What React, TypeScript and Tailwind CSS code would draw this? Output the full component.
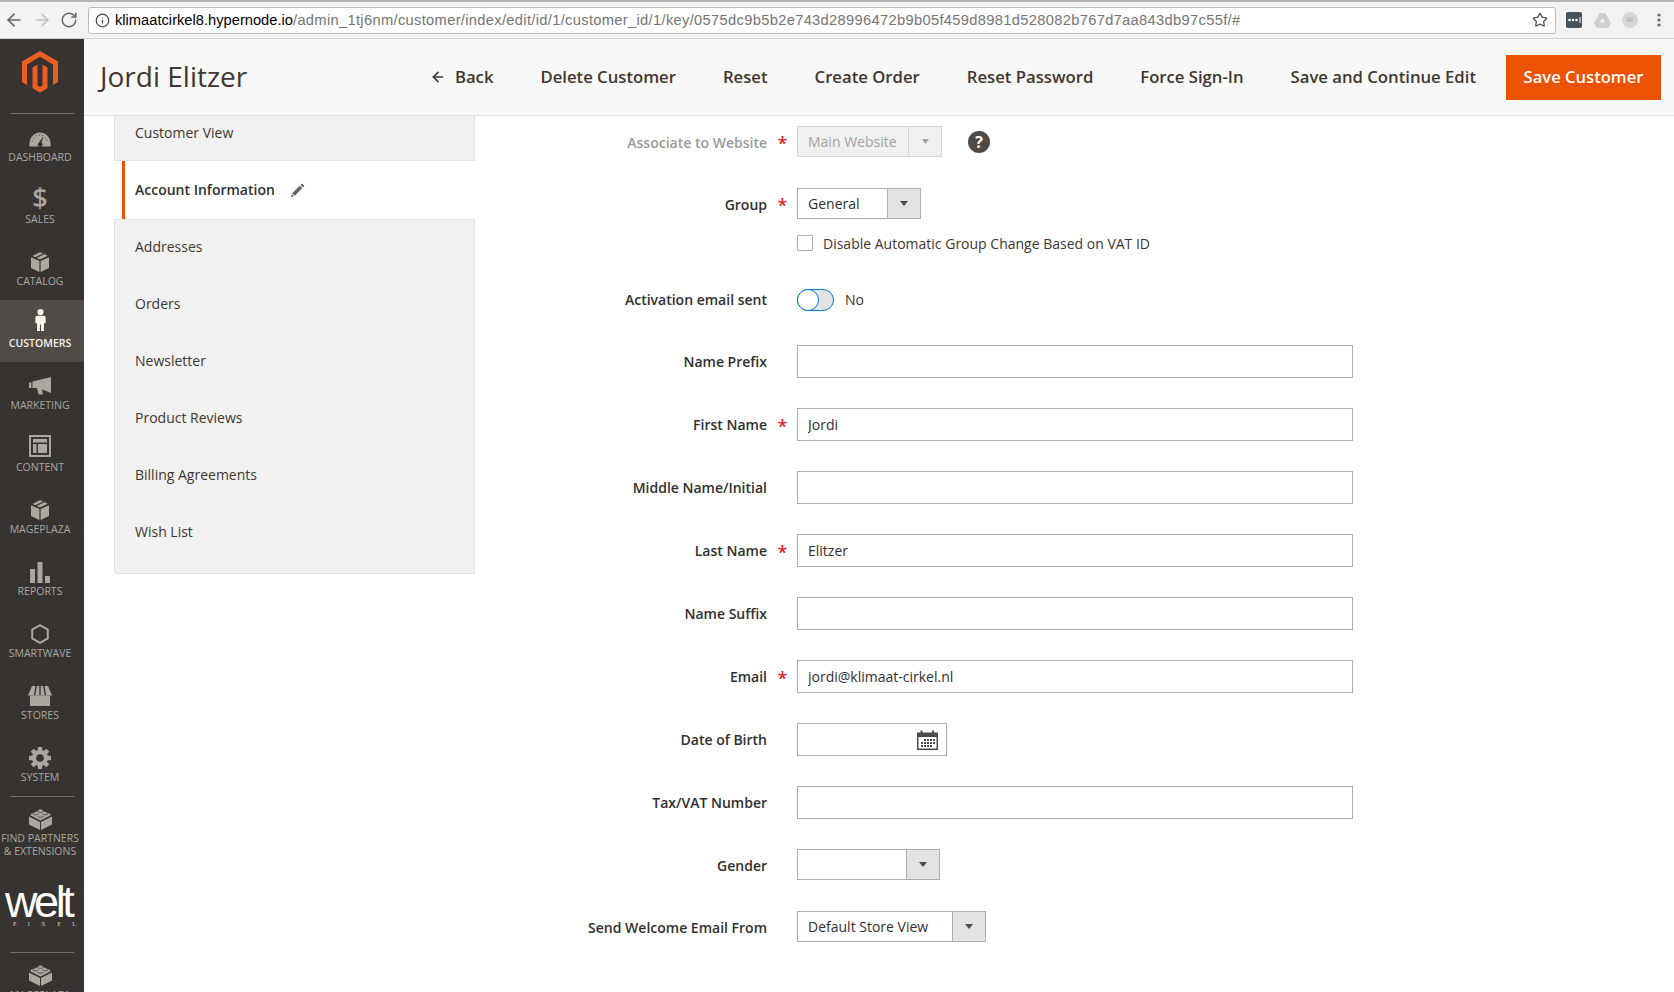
import React from "react";
import { ArrowLeft, ArrowRight, RotateCw, Star, Info } from "lucide-react";

const IconBox = ({ children }: { children: React.ReactNode }) => (
  <div className="flex h-[26px] items-center justify-center">{children}</div>
);

const BG = "#373330";

const Gauge = ({ c }: { c: string }) => (
  <svg width="22" height="15" viewBox="0 0 23 17" className="mt-[2px]" preserveAspectRatio="none">
    <path fill={c} d="M0.5 16.5 C-0.5 7 5 0.5 11.5 0.5 C18 0.5 23.5 7 22.5 16.5 Z" />
    <path stroke={BG} strokeWidth="1" fill="none" strokeDasharray="1 2.5" d="M4 11 C4.5 6.5 7.5 3.5 11.5 3.5 C15.5 3.5 18.5 6.5 19 11" />
    <path fill={BG} d="M15.5 4.5 L13 12 A2.5 2.5 0 1 1 9.5 13 Z" />
  </svg>
);
const Box = ({ c, w = 18, h = 20 }: { c: string; w?: number; h?: number }) => (
  <svg width={w} height={h} viewBox="0 0 18 20">
    <path fill={c} d="M0 5.2 L8.4 9 V20 L0 16 Z M9.6 9 L18 5.2 V16 L9.6 20 Z" />
    <path fill={c} d="M9 0 L12 1.4 L4.4 5.2 L1.4 3.9 Z M13.4 2.1 L16.6 3.7 L9 7.6 L5.8 6 Z" />
  </svg>
);
const Person = ({ c }: { c: string }) => (
  <svg width="11" height="24" viewBox="0 0 12 24" className="-mt-[8px]">
    <circle cx="6" cy="3.4" r="3.4" fill={c} />
    <path fill={c} d="M2.6 7.4 H9.4 C10.8 7.4 11.6 8.4 11.6 9.6 V15.5 H9.8 V24 H6.6 V17 H5.4 V24 H2.2 V15.5 H0.4 V9.6 C0.4 8.4 1.2 7.4 2.6 7.4 Z" />
  </svg>
);
const Megaphone = ({ c }: { c: string }) => (
  <svg width="22" height="18" viewBox="0 0 22 18">
    <path fill={c} d="M0 5.5 H2.4 V11 H0 Z M3.4 4.5 L22 0 V16 L13 12.6 L14 17.5 L9.5 17.5 L8 11 L3.4 11 Z" />
  </svg>
);
const ContentIcon = ({ c }: { c: string }) => (
  <svg width="22" height="22" viewBox="0 0 22 22" className="-mt-[4px]">
    <path fill={c} fillRule="evenodd" d="M0 0 H22 V22 H0 Z M2 2 V20 H20 V2 Z" />
    <path fill={c} d="M4 4 H18 V7.5 H4 Z M4 9 H7.5 V18 H4 Z M9 9 H18 V18 H9 Z" />
  </svg>
);
const Bars = ({ c }: { c: string }) => (
  <svg width="20" height="21" viewBox="0 0 20 21">
    <path fill={c} d="M0 7 H5 V21 H0 Z M7.5 0 H12.5 V21 H7.5 Z M15 14 H20 V21 H15 Z" />
  </svg>
);
const Hexagon = ({ c }: { c: string }) => (
  <svg width="18" height="20" viewBox="0 0 18 20">
    <path fill="none" stroke={c} strokeWidth="2" d="M9 1.2 L16.8 5.6 V14.4 L9 18.8 L1.2 14.4 V5.6 Z" />
  </svg>
);
const Stores = ({ c }: { c: string }) => (
  <svg width="24" height="20" viewBox="0 0 24 20">
    <path fill={c} d="M4 0 H20 L24 9.5 H0 Z" />
    <path stroke={BG} strokeWidth="1.4" fill="none" d="M8.2 0 L6.6 9.5 M12 0 V9.5 M15.8 0 L17.4 9.5" />
    <path fill={c} d="M2 9.5 H22 V20 H2 Z" />
  </svg>
);
const Gear = ({ c }: { c: string }) => (
  <svg width="22" height="22" viewBox="0 0 22 22">
    <circle cx="11" cy="11" r="8" fill={c} />
    <g fill={c}>
      <rect x="8.8" y="0" width="4.4" height="5" rx="0.8" />
      <rect x="8.8" y="0" width="4.4" height="5" rx="0.8" transform="rotate(45 11 11)" />
      <rect x="8.8" y="0" width="4.4" height="5" rx="0.8" transform="rotate(90 11 11)" />
      <rect x="8.8" y="0" width="4.4" height="5" rx="0.8" transform="rotate(135 11 11)" />
      <rect x="8.8" y="0" width="4.4" height="5" rx="0.8" transform="rotate(180 11 11)" />
      <rect x="8.8" y="0" width="4.4" height="5" rx="0.8" transform="rotate(225 11 11)" />
      <rect x="8.8" y="0" width="4.4" height="5" rx="0.8" transform="rotate(270 11 11)" />
      <rect x="8.8" y="0" width="4.4" height="5" rx="0.8" transform="rotate(315 11 11)" />
    </g>
    <circle cx="11" cy="11" r="3.8" fill={BG} />
  </svg>
);
const Lego = ({ c }: { c: string }) => (
  <svg width="23" height="21" viewBox="0 0 23 21">
    <path fill={c} d="M0 7.5 L11 13 V21 L0 15.5 Z M12 13 L23 7.5 V15.5 L12 21 Z" />
    <path fill={c} d="M11.5 0.5 C13 0.5 14 1.1 14 2 L19 4.2 C20.5 4.4 21.5 5 21.5 5.9 C21.5 6.2 21.4 6.4 21.2 6.6 L11.5 11.6 L1.8 6.6 C1.6 6.4 1.5 6.2 1.5 5.9 C1.5 5 2.5 4.4 4 4.2 L9 2 C9 1.1 10 0.5 11.5 0.5 Z" />
    <path fill="none" stroke={BG} strokeWidth="0.7" d="M8.5 2.6 C9 3.6 14 3.6 14.5 2.6 M4 5 C4.5 6 9 6 9.5 5 M13.5 5 C14 6 18.5 6 19 5 M8.5 7.4 C9 8.4 14 8.4 14.5 7.4" />
  </svg>
);

const G = "#aaa6a0";
const W = "#f7f3eb";

const NavItem = ({
  label,
  icon,
  active,
}: {
  label: string;
  icon: React.ReactNode;
  active?: boolean;
}) => (
  <div className={active ? "h-[62px] shrink-0 bg-[#514b47] pr-[4px] pt-[11px] text-center" : "h-[62px] shrink-0 pr-[4px] pt-[11px] text-center"}>
    <IconBox>{icon}</IconBox>
    <div className={active ? "text-[10.5px] font-semibold leading-[12px] text-[#f7f3eb]" : "text-[10.5px] leading-[12px] text-[#aaa6a0]"}>
      {label}
    </div>
  </div>
);

const Sidebar = () => (
  <aside className="flex h-[953px] w-[84px] shrink-0 flex-col overflow-hidden bg-[#373330]">
    <div className="flex h-[74px] shrink-0 items-center justify-center pb-[8px] pr-[4px]">
      <svg width="36" height="42" viewBox="0 0 36 42">
        <path
          fill="#eb5f22"
          d="M18 0 L36 10.4 V31 L31 34 V13.4 L18 5.8 L5 13.4 V34 L0 31 V10.4 Z M20.5 34.5 L18 36 L15.5 34.5 V13.5 L10.5 16.4 V37.3 L18 41.6 L25.5 37.3 V16.4 L20.5 13.5 Z"
        />
      </svg>
    </div>
    <div className="mx-[10px] h-px shrink-0 bg-[#736d68]" />
    <NavItem label="DASHBOARD" icon={<Gauge c={G} />} />
    <NavItem label="SALES" icon={<span className="-mt-[4px] text-[27px] font-semibold leading-[20px] text-[#aaa6a0]">$</span>} />
    <NavItem label="CATALOG" icon={<Box c={G} />} />
    <NavItem label="CUSTOMERS" active icon={<Person c={W} />} />
    <NavItem label="MARKETING" icon={<Megaphone c={G} />} />
    <NavItem label="CONTENT" icon={<ContentIcon c={G} />} />
    <NavItem label="MAGEPLAZA" icon={<Box c={G} />} />
    <NavItem label="REPORTS" icon={<Bars c={G} />} />
    <NavItem label="SMARTWAVE" icon={<Hexagon c={G} />} />
    <NavItem label="STORES" icon={<Stores c={G} />} />
    <NavItem label="SYSTEM" icon={<Gear c={G} />} />
    <div className="mx-[10px] h-px shrink-0 bg-[#736d68]" />
    <div className="shrink-0 pr-[4px] pt-[9px] text-center">
      <IconBox>
        <Lego c={G} />
      </IconBox>
      <div className="text-[10.5px] leading-[13px] text-[#aaa6a0]">
        FIND PARTNERS
        <br />& EXTENSIONS
      </div>
    </div>
    <div className="mt-[25px] h-[38px] shrink-0 whitespace-nowrap pl-[5px] text-[45px] leading-[38px] tracking-[-3.4px] text-white [font-family:'Liberation_Sans',sans-serif]">
      welt
    </div>
    <div className="h-[6px] shrink-0 whitespace-nowrap pl-[13px] text-[6px] leading-[6px] tracking-[11.5px] text-[#cfcfcf] [font-family:'Liberation_Serif',serif]">
      PIXEL
    </div>
    <div className="mx-[10px] mt-[25px] h-px shrink-0 bg-[#736d68]" />
    <div className="shrink-0 pr-[4px] pt-[9px] text-center">
      <IconBox>
        <Lego c={G} />
      </IconBox>
      <div className="text-[10.5px] leading-[14px] text-[#aaa6a0]">MAGEPLAZA</div>
    </div>
  </aside>
);

const ChromeBar = () => (
  <div className="h-[39px] bg-[#f2f2f2] border-b border-[#d0d0d0] [font-family:'Liberation_Sans',sans-serif]">
    <div className="flex h-[2px] bg-[#b5b5b5]" />
    <div className="flex h-[36px] items-center">
      <div className="flex w-[88px] items-center pl-[4px]">
        <ArrowLeft size={20} strokeWidth={2} className="text-[#666]" />
        <ArrowRight size={20} strokeWidth={2} className="ml-[8px] text-[#c4c4c4]" />
        <RotateCw size={18} strokeWidth={2} className="ml-[8px] text-[#666]" />
      </div>
      <div className="flex h-[27px] w-[1468px] items-center rounded-[3px] border border-[#bdbdbd] bg-white pl-[6px] pr-[7px]">
        <Info size={15} strokeWidth={2} className="shrink-0 text-[#444]" />
        <div className="ml-[5px] overflow-hidden whitespace-nowrap text-[14.7px] tracking-[0.32px] text-[#757575]">
          <span className="tracking-normal text-black">klimaatcirkel8.hypernode.io</span>
          /admin_1tj6nm/customer/index/edit/id/1/customer_id/1/key/0575dc9b5b2e743d28996472b9b05f459d8981d528082b767d7aa843db97c55f/#
        </div>
        <Star size={16} strokeWidth={2} className="ml-auto shrink-0 text-[#555]" />
      </div>
      <div className="ml-[10px] flex items-center">
        <div className="flex h-[16px] w-[16px] items-center justify-center rounded-[2px] bg-[#46535f]">
          <svg width="13" height="6" viewBox="0 0 13 6">
            <circle cx="1.5" cy="3" r="1.3" fill="#fff" />
            <circle cx="5" cy="3" r="1.3" fill="#fff" />
            <circle cx="8.5" cy="3" r="1.3" fill="#fff" />
            <rect x="11.5" y="0" width="1" height="6" fill="#fff" />
          </svg>
        </div>
        <svg width="17" height="15" viewBox="0 0 17 15" className="ml-[12px]">
          <path fill="#cfcfcf" d="M5.8 0 H11.2 L17 10 L14.3 15 H2.7 L0 10 Z" />
          <path fill="#f2f2f2" d="M8.5 5 L11 9.6 H6 Z" />
        </svg>
        <div className="ml-[11px] flex h-[16px] w-[16px] items-center justify-center rounded-full bg-[#d6d6d6] text-[9px] font-bold text-[#bbb]">
          w
        </div>
        <svg width="4" height="14" viewBox="0 0 4 14" className="ml-[19px]">
          <circle cx="2" cy="2" r="1.6" fill="#666" />
          <circle cx="2" cy="7" r="1.6" fill="#666" />
          <circle cx="2" cy="12" r="1.6" fill="#666" />
        </svg>
      </div>
    </div>
  </div>
);

const HeaderLink = ({ children }: { children: React.ReactNode }) => (
  <span className="text-[16.7px] font-semibold text-[#41362f]">{children}</span>
);

const Header = () => (
  <header className="flex h-[77px] items-center border-b border-[#e3e3e3] bg-[#f8f8f8] pl-[16px] pr-[13px]">
    <h1 className="pb-[2px] text-[28px] font-normal leading-none text-[#41362f]">Jordi Elitzer</h1>
    <div className="ml-auto flex items-center gap-[47px]">
      <span className="flex items-center gap-[9px]">
        <ArrowLeft size={16} strokeWidth={2.4} className="text-[#41362f]" />
        <HeaderLink>Back</HeaderLink>
      </span>
      <HeaderLink>Delete Customer</HeaderLink>
      <HeaderLink>Reset</HeaderLink>
      <HeaderLink>Create Order</HeaderLink>
      <HeaderLink>Reset Password</HeaderLink>
      <HeaderLink>Force Sign-In</HeaderLink>
      <HeaderLink>Save and Continue Edit</HeaderLink>
      <button className="-ml-[17px] h-[45px] w-[155px] bg-[#eb5202] text-[16.6px] font-semibold text-white">
        Save Customer
      </button>
    </div>
  </header>
);

const Tabs = () => (
  <div className="ml-[30px] w-[361px] shrink-0 text-[14px] text-[#41362f]">
    <div className="flex h-[45px] items-center border-x border-b border-[#e3e3e3] bg-[#f1f1f1] pb-[12px] pl-[20px]">
      Customer View
    </div>
    <div className="ml-[8px] flex h-[58px] items-center border-l-[3px] border-[#eb5202] bg-white pb-[1px] pl-[10px] font-semibold text-[#303030]">
      Account Information
      <svg width="14" height="14" viewBox="0 0 14 14" className="ml-[16px]">
        <path fill="#666" d="M10.8 0.6 L13.4 3.2 L12 4.6 L9.4 2 Z M8.7 2.7 L11.3 5.3 L3.8 12.8 L1.2 10.2 Z M0.7 11 L3 13.3 L0 14 Z" />
      </svg>
    </div>
    <div className="border-x border-b border-t border-[#e3e3e3] bg-[#f1f1f1] pb-[11px] pl-[20px]">
      {["Addresses", "Orders", "Newsletter", "Product Reviews", "Billing Agreements", "Wish List"].map((t) => (
        <div key={t} className="flex h-[57px] items-center pb-[4px]">
          {t}
        </div>
      ))}
    </div>
  </div>
);

const Req = () => <span className="text-[18px] font-semibold leading-none text-[#e22626]">*</span>;

const Row = ({
  label,
  required,
  dim,
  flush,
  className,
  children,
}: {
  label: string;
  required?: boolean;
  dim?: boolean;
  flush?: boolean;
  className?: string;
  children: React.ReactNode;
}) => (
  <div className={`flex items-center ${className ?? ""}`}>
    <label
      className={`w-[292px] text-right text-[14px] font-semibold ${flush ? "pb-[1px]" : "pt-[1px]"} ${
        dim ? "text-[#9a9a9a]" : "text-[#303030]"
      }`}
    >
      {label}
    </label>
    <div className="flex w-[30px] justify-center pl-[1px] pt-[3px]">{required && <Req />}</div>
    {children}
  </div>
);

const TextInput = ({ value }: { value?: string }) => (
  <input
    readOnly
    value={value ?? ""}
    className="h-[33px] w-[556px] border border-[#adadad] bg-white px-[10px] text-[14px] text-[#303030] outline-none"
  />
);

const Caret = ({ c, small }: { c: string; small?: boolean }) => (
  <svg width={small ? 7 : 8} height={5} viewBox="0 0 9 6" preserveAspectRatio="none">
    <path fill={c} d="M0 0 H9 L4.5 6 Z" />
  </svg>
);

const Select = ({ value, w, disabled }: { value?: string; w: string; disabled?: boolean }) => (
  <div
    className={
      disabled
        ? `flex h-[31px] ${w} border border-[#d6d6d6] bg-[#f0f0f0] text-[14px] text-[#a3a3a3]`
        : `flex h-[31px] ${w} border border-[#adadad] bg-white text-[14px] text-[#303030]`
    }
  >
    <div className="flex flex-1 items-center pb-[1px] pl-[10px]">{value}</div>
    <div
      className={
        disabled
          ? "flex w-[33px] items-center justify-center border-l border-[#d6d6d6]"
          : "flex w-[33px] items-center justify-center border-l border-[#adadad] bg-[#e3e3e3]"
      }
    >
      <Caret c={disabled ? "#a3a3a3" : "#514943"} small={disabled} />
    </div>
  </div>
);

const Form = () => (
  <div className="flex-1">
    <Row label="Associate to Website" required dim className="mt-[10px]">
      <Select value="Main Website" w="w-[145px]" disabled />
      <div className="ml-[26px] flex h-[22px] w-[22px] items-center justify-center rounded-full bg-[#514943] text-[16px] font-bold text-white">
        ?
      </div>
    </Row>
    <Row label="Group" required className="mt-[31px]">
      <Select value="General" w="w-[124px]" />
    </Row>
    <div className="ml-[322px] mt-[16px] flex h-[16px] items-center text-[14px] text-[#41362f]">
      <div className="h-[16px] w-[16px] rounded-[1px] border border-[#adadad] bg-white" />
      <span className="ml-[10px]">Disable Automatic Group Change Based on VAT ID</span>
    </div>
    <Row label="Activation email sent" flush className="mt-[38px]">
      <div className="relative h-[22px] w-[37px] rounded-full border border-[#007bdb] bg-[#e3e3e3]">
        <div className="absolute -left-px -top-px h-[22px] w-[22px] rounded-full border border-[#007bdb] bg-white" />
      </div>
      <span className="ml-[11px] pb-[1px] text-[14px] text-[#41362f]">No</span>
    </Row>
    <Row label="Name Prefix" flush className="mt-[34px]">
      <TextInput />
    </Row>
    <Row label="First Name" required flush className="mt-[30px]">
      <TextInput value="Jordi" />
    </Row>
    <Row label="Middle Name/Initial" flush className="mt-[30px]">
      <TextInput />
    </Row>
    <Row label="Last Name" required flush className="mt-[30px]">
      <TextInput value="Elitzer" />
    </Row>
    <Row label="Name Suffix" flush className="mt-[30px]">
      <TextInput />
    </Row>
    <Row label="Email" required flush className="mt-[30px]">
      <TextInput value="jordi@klimaat-cirkel.nl" />
    </Row>
    <Row label="Date of Birth" flush className="mt-[30px]">
      <div className="flex h-[33px] w-[150px] items-center justify-end border border-[#adadad] bg-white pr-[8px]">
        <svg width="21" height="20" viewBox="0 0 21 20">
          <path fill="#514943" fillRule="evenodd" d="M0 2.5 H3.5 V0.5 H5.5 V2.5 H15 V0.5 H17 V2.5 H21 V20 H0 Z M1.5 7 V18.5 H19.5 V7 Z" />
          <path
            fill="#514943"
            d="M7 9 h2 v2 h-2 z M10 9 h2 v2 h-2 z M13 9 h2 v2 h-2 z M16 9 h2 v2 h-2 z M4 12 h2 v2 h-2 z M7 12 h2 v2 h-2 z M10 12 h2 v2 h-2 z M13 12 h2 v2 h-2 z M16 12 h2 v2 h-2 z M4 15 h2 v2 h-2 z M7 15 h2 v2 h-2 z M10 15 h2 v2 h-2 z M13 15 h2 v2 h-2 z"
          />
        </svg>
      </div>
    </Row>
    <Row label="Tax/VAT Number" flush className="mt-[30px]">
      <TextInput />
    </Row>
    <Row label="Gender" className="mt-[30px]">
      <Select w="w-[143px]" />
    </Row>
    <Row label="Send Welcome Email From" className="mt-[31px]">
      <Select value="Default Store View" w="w-[189px]" />
    </Row>
  </div>
);

export default function App() {
  return (
    <div className="h-[992px] w-[1674px] overflow-hidden bg-white font-['Open_Sans',sans-serif]">
      <ChromeBar />
      <div className="flex">
        <Sidebar />
        <main className="min-w-0 flex-1">
          <Header />
          <div className="flex">
            <Tabs />
            <Form />
          </div>
        </main>
      </div>
    </div>
  );
}
